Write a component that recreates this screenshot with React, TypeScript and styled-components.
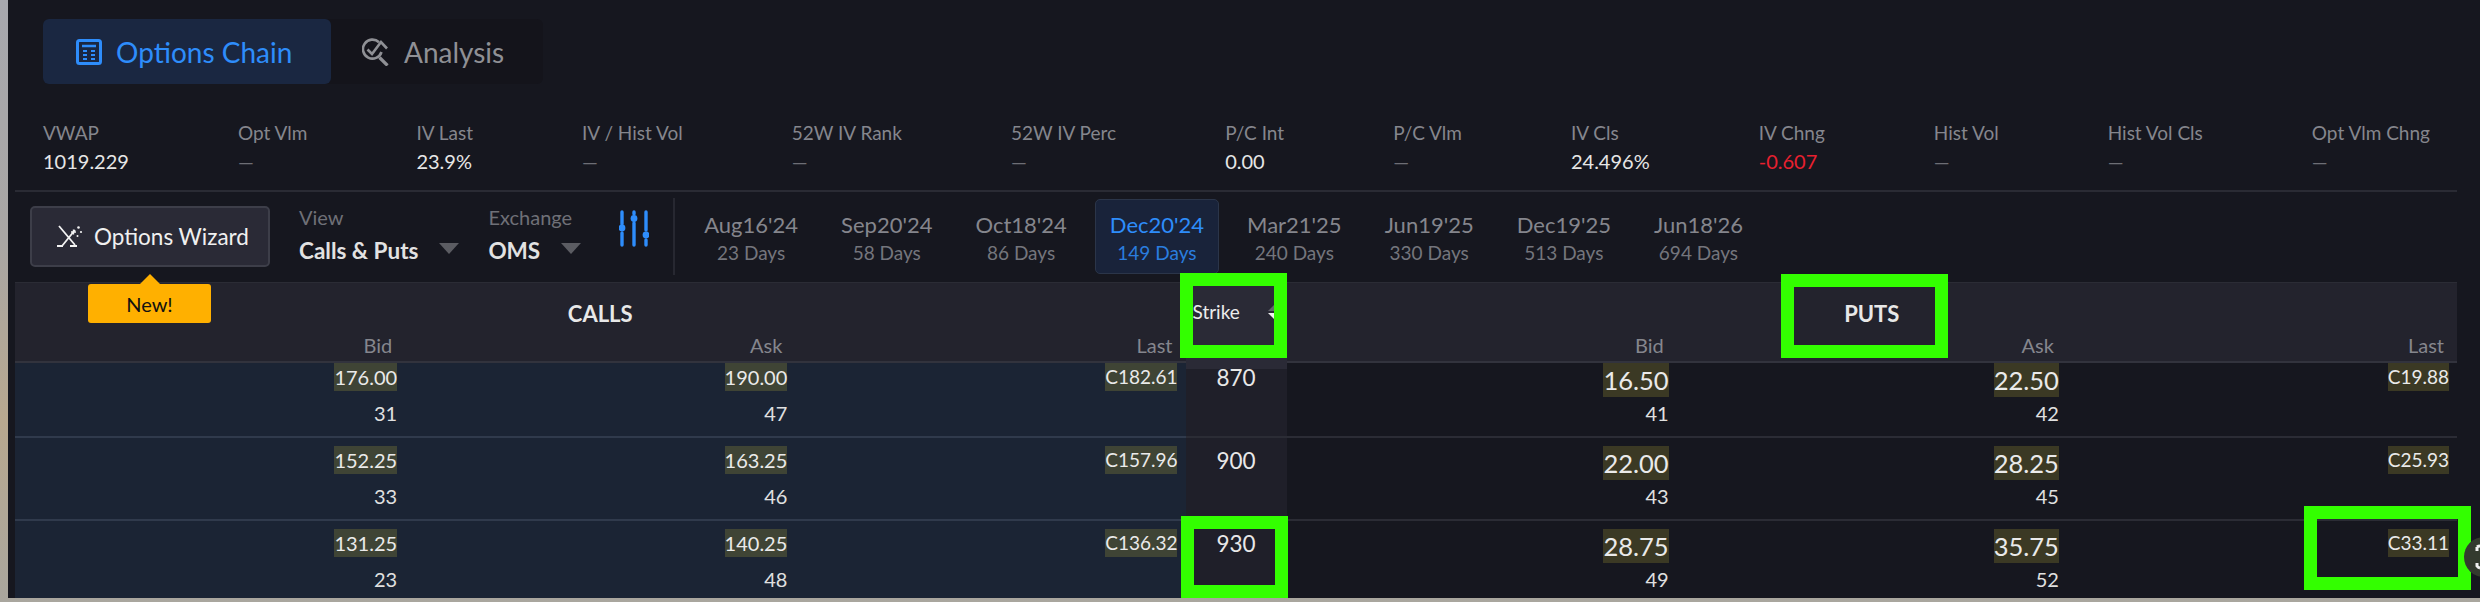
import React from 'react';
import styled, { createGlobalStyle } from 'styled-components';

const GlobalStyle = createGlobalStyle`
  html, body {
    margin: 0;
    padding: 0;
    height: 602px;
    overflow: hidden;
  }
  html {
    background: linear-gradient(180deg, #a7a8ae 0%, #a9a6a4 40%, #b8a88f 70%, #a9a69e 100%);
  }
  * {
    box-sizing: border-box;
  }
`;

const stats = [
  { label: 'VWAP', value: '1019.229' },
  { label: 'Opt Vlm' },
  { label: 'IV Last', value: '23.9%' },
  { label: 'IV / Hist Vol' },
  { label: '52W IV Rank' },
  { label: '52W IV Perc' },
  { label: 'P/C Int', value: '0.00' },
  { label: 'P/C Vlm' },
  { label: 'IV Cls', value: '24.496%' },
  { label: 'IV Chng', value: '-0.607', down: true },
  { label: 'Hist Vol' },
  { label: 'Hist Vol Cls' },
  { label: 'Opt Vlm Chng' },
];

const expiries = [
  { date: "Aug16'24", days: '23 Days' },
  { date: "Sep20'24", days: '58 Days' },
  { date: "Oct18'24", days: '86 Days' },
  { date: "Dec20'24", days: '149 Days', active: true },
  { date: "Mar21'25", days: '240 Days' },
  { date: "Jun19'25", days: '330 Days' },
  { date: "Dec19'25", days: '513 Days' },
  { date: "Jun18'26", days: '694 Days' },
];

const rows = [
  {
    strike: '870',
    calls: { bid: '176.00', bidSize: '31', ask: '190.00', askSize: '47', last: 'C182.61' },
    puts: { bid: '16.50', bidSize: '41', ask: '22.50', askSize: '42', last: 'C19.88' },
  },
  {
    strike: '900',
    calls: { bid: '152.25', bidSize: '33', ask: '163.25', askSize: '46', last: 'C157.96' },
    puts: { bid: '22.00', bidSize: '43', ask: '28.25', askSize: '45', last: 'C25.93' },
  },
  {
    strike: '930',
    calls: { bid: '131.25', bidSize: '23', ask: '140.25', askSize: '48', last: 'C136.32' },
    puts: { bid: '28.75', bidSize: '49', ask: '35.75', askSize: '52', last: 'C33.11' },
  },
];

function TableIcon() {
  return (
    <svg width="26" height="26" viewBox="0 0 26 26" fill="none" stroke="#2e8dfb">
      <rect x="1.5" y="1.5" width="23" height="23" rx="2" strokeWidth="3" />
      <path d="M6 7h14" strokeWidth="2.5" />
      <path d="M7 12h4M15 12h4M7 16h4M15 16h4M7 20h4M15 20h4" strokeWidth="2.2" />
    </svg>
  );
}

function AnalysisIcon() {
  return (
    <svg width="30" height="28" viewBox="0 0 30 28" fill="none" stroke="#8f9095" strokeWidth="2.6">
      <path d="M17 4.2A9.5 9.5 0 1 0 19.5 14" />
      <path d="M5.5 11.5l4.5 4.5 9-12 6 6.5" />
      <path d="M17.5 19.5l8 8" strokeWidth="3.2" />
    </svg>
  );
}

function WizardIcon() {
  return (
    <svg width="26" height="24" viewBox="0 0 26 24" fill="none" stroke="#f2f2f2" strokeWidth="1.8">
      <path d="M2 1l16 19M0 21h6l-1 0M18 5L5 21M13 21h7" />
      <path d="M14 7h5M16.5 4.5v5" strokeWidth="1.4" />
      <circle cx="21.5" cy="2.5" r="1.3" fill="#f2f2f2" stroke="none" />
      <circle cx="24" cy="7" r="1.1" fill="#f2f2f2" stroke="none" />
      <circle cx="20.5" cy="11" r="1" fill="#f2f2f2" stroke="none" />
    </svg>
  );
}

function SlidersIcon() {
  return (
    <svg width="30" height="37" viewBox="0 0 30 37" fill="none" stroke="#2e8dfb" strokeWidth="3.4" strokeLinecap="round">
      <path d="M3 2v12M3 23v12M15 2v2M15 13v22M27 2v18M27 30v5" />
      <circle cx="3" cy="18" r="3.4" fill="#2e8dfb" stroke="none" />
      <circle cx="15" cy="8.5" r="3.4" fill="#2e8dfb" stroke="none" />
      <circle cx="27" cy="25" r="3.4" fill="#2e8dfb" stroke="none" />
    </svg>
  );
}

function SideCells({ side, large }: { side: any; large?: boolean }) {
  return (
    <>
      <QuoteCell>
        <Price $large={large}>{side.bid}</Price>
        <Size>{side.bidSize}</Size>
      </QuoteCell>
      <QuoteCell>
        <Price $large={large}>{side.ask}</Price>
        <Size>{side.askSize}</Size>
      </QuoteCell>
      <QuoteCell>
        <LastPrice>{side.last}</LastPrice>
      </QuoteCell>
    </>
  );
}

export default function App() {
  return (
    <>
      <GlobalStyle />
      <Terminal>
        <TabBar>
          <Tab $active>
            <TableIcon />
            Options Chain
          </Tab>
          <Tab>
            <AnalysisIcon />
            Analysis
          </Tab>
        </TabBar>

        <StatsRow>
          {stats.map((stat) => (
            <Stat key={stat.label}>
              <StatLabel>{stat.label}</StatLabel>
              <StatValue $down={stat.down} $empty={!stat.value}>
                {stat.value || '—'}
              </StatValue>
            </Stat>
          ))}
        </StatsRow>

        <Toolbar>
          <WizardWrap>
            <WizardButton>
              <WizardIcon />
              Options Wizard
            </WizardButton>
            <NewTip>New!</NewTip>
          </WizardWrap>
          <Picker>
            <PickerLabel>View</PickerLabel>
            <PickerValue>
              Calls &amp; Puts
              <Caret />
            </PickerValue>
          </Picker>
          <Picker>
            <PickerLabel>Exchange</PickerLabel>
            <PickerValue>
              OMS
              <Caret />
            </PickerValue>
          </Picker>
          <SlidersSlot>
            <SlidersIcon />
          </SlidersSlot>
          <ExpiryList>
            {expiries.map((expiry) => (
              <Expiry key={expiry.date} $active={expiry.active}>
                <ExpiryDate>{expiry.date}</ExpiryDate>
                <ExpiryDays>{expiry.days}</ExpiryDays>
              </Expiry>
            ))}
          </ExpiryList>
        </Toolbar>

        <Table>
          <HeaderRow>
            <HeaderSide>
              <SideTitle>CALLS</SideTitle>
              <ColumnLabel>Bid</ColumnLabel>
              <ColumnLabel>Ask</ColumnLabel>
              <ColumnLabel>Last</ColumnLabel>
            </HeaderSide>
            <StrikeHead>
              <StrikeTitle>
                Strike
                <SortArrows>
                  <SortUp />
                  <SortDown />
                </SortArrows>
              </StrikeTitle>
              <StrikeIv>IV: 23.57%</StrikeIv>
            </StrikeHead>
            <HeaderSide>
              <SideTitle>PUTS</SideTitle>
              <ColumnLabel>Bid</ColumnLabel>
              <ColumnLabel>Ask</ColumnLabel>
              <ColumnLabel>Last</ColumnLabel>
            </HeaderSide>
          </HeaderRow>
          <RowList>
            {rows.map((row) => (
              <Row key={row.strike}>
                <CallsSide>
                  <SideCells side={row.calls} />
                </CallsSide>
                <StrikeCell>{row.strike}</StrikeCell>
                <PutsSide>
                  <SideCells side={row.puts} large />
                </PutsSide>
              </Row>
            ))}
          </RowList>
        </Table>

        <Marker $left={1172} $top={273} $width={107} $height={85} />
        <Marker $left={1773} $top={274} $width={167} $height={84} />
        <Marker $left={1173} $top={516} $width={107} $height={82} />
        <Marker $left={2296} $top={506} $width={167} $height={84} />
        <ChatBubble>
          <svg width="16" height="40" viewBox="0 0 16 40" fill="none" stroke="#f0f0f0" strokeWidth="3">
            <path d="M13 10a5 5 0 0 1 3-1M13 10v4M13 26v3a5 5 0 0 0 3 2" />
          </svg>
        </ChatBubble>
      </Terminal>
    </>
  );
}

const Terminal = styled.div`
  position: relative;
  width: 2472px;
  height: 598px;
  margin-left: 8px;
  padding: 19px 23px 0 7px;
  overflow: hidden;
  background: #16171f;
  color: #e4e4e4;
  font-family: Lato, 'Liberation Sans', sans-serif;
`;

const TabBar = styled.div`
  display: flex;
  width: 500px;
  height: 65px;
  margin-left: 28px;
  border-radius: 6px;
  background: #14141b;
`;

const Tab = styled.div<{ $active?: boolean }>`
  display: flex;
  align-items: center;
  gap: ${(p) => (p.$active ? '14px' : '12px')};
  width: ${(p) => (p.$active ? '288px' : '212px')};
  padding-left: ${(p) => (p.$active ? '33px' : '31px')};
  border-radius: 6px;
  background: ${(p) => (p.$active ? '#1a2741' : 'transparent')};
  color: ${(p) => (p.$active ? '#2e8dfb' : '#8f9095')};
  font-size: 28px;
`;

const StatsRow = styled.div`
  display: flex;
  justify-content: space-between;
  height: 108px;
  padding: 38px 27px 0 28px;
  border-bottom: 2px solid #2a2b34;
`;

const Stat = styled.div`
  display: flex;
  flex-direction: column;
  gap: 5px;
`;

const StatLabel = styled.div`
  color: #85868d;
  font-size: 19px;
  line-height: 22px;
  white-space: nowrap;
`;

const StatValue = styled.div<{ $down?: boolean; $empty?: boolean }>`
  color: ${(p) => (p.$down ? '#e8202f' : p.$empty ? '#6d6e75' : '#e6e6e6')};
  font-size: 20px;
  line-height: 24px;
  white-space: nowrap;
`;

const Toolbar = styled.div`
  display: flex;
  align-items: flex-start;
  height: 90px;
  padding: 14px 0 0 15px;
`;

const WizardWrap = styled.div`
  position: relative;
  flex: none;
  margin-right: 29px;
`;

const WizardButton = styled.div`
  display: flex;
  align-items: center;
  gap: 11px;
  width: 240px;
  height: 61px;
  padding-left: 25px;
  border: 2px solid #3d3e49;
  border-radius: 5px;
  background: #2a2a36;
  color: #f0f0f0;
  font-size: 22.5px;
`;

const NewTip = styled.div`
  position: absolute;
  top: 78px;
  left: 58px;
  z-index: 3;
  width: 123px;
  height: 39px;
  border-radius: 3px;
  background: #ffb000;
  color: #111;
  font-size: 20px;
  line-height: 40px;
  text-align: center;

  &::before {
    content: '';
    position: absolute;
    top: -10px;
    left: 50%;
    margin-left: -10px;
    border-right: 10px solid transparent;
    border-bottom: 10px solid #ffb000;
    border-left: 10px solid transparent;
  }
`;

const Picker = styled.div`
  flex: none;
  margin-right: 29px;
`;

const PickerLabel = styled.div`
  margin-top: -1px;
  color: #6f7077;
  font-size: 20px;
  line-height: 24px;
`;

const PickerValue = styled.div`
  display: flex;
  align-items: center;
  gap: 21px;
  margin-top: 9px;
  color: #e2e2e2;
  font-size: 22.5px;
  font-weight: 700;
  line-height: 26px;
`;

const Caret = styled.span`
  margin-top: -5px;
  border-top: 11px solid #5b5c62;
  border-right: 10px solid transparent;
  border-left: 10px solid transparent;
`;

const SlidersSlot = styled.div`
  flex: none;
  width: 56px;
  height: 77px;
  margin: -8px 0 0 9px;
  padding-top: 12px;
  border-right: 2px solid #272831;
`;

const ExpiryList = styled.div`
  display: flex;
  gap: 13px;
  margin-top: -7px;
  margin-left: 14px;
`;

const Expiry = styled.div<{ $active?: boolean }>`
  display: flex;
  flex-direction: column;
  align-items: center;
  height: 75px;
  padding: 11px 14px 0;
  border: 1px solid ${(p) => (p.$active ? '#2b3549' : 'transparent')};
  border-radius: 5px;
  background: ${(p) => (p.$active ? '#19233a' : 'transparent')};
  color: ${(p) => (p.$active ? '#2e8dfb' : '#85868d')};
`;

const ExpiryDate = styled.div`
  font-size: 22px;
  line-height: 28px;
  white-space: nowrap;
`;

const ExpiryDays = styled.div`
  font-size: 19px;
  line-height: 28px;
  opacity: 0.85;
  white-space: nowrap;
`;

const Table = styled.div`
  display: flex;
  flex-direction: column;
`;

const HeaderRow = styled.div`
  position: relative;
  z-index: 1;
  display: grid;
  grid-template-columns: 1fr 101px 1fr;
  height: 81px;
  border-top: 1px solid #2b2c35;
  border-bottom: 2px solid #32333d;
  background: #23232d;
`;

const HeaderSide = styled.div`
  display: grid;
  grid-template-columns: repeat(3, 1fr);
  grid-template-rows: 49px 1fr;
`;

const SideTitle = styled.div`
  grid-column: 1 / -1;
  align-self: end;
  margin-bottom: 4px;
  color: #e8e8e8;
  font-size: 22px;
  font-weight: 700;
  line-height: 28px;
  text-align: center;
`;

const ColumnLabel = styled.div`
  padding-right: 13px;
  color: #85868d;
  font-size: 20px;
  line-height: 26px;
  text-align: right;
`;

const StrikeHead = styled.div`
  height: 86px;
  padding: 17px 0 0 7px;
  background: #2a2a36;
  overflow: hidden;
`;

const StrikeTitle = styled.div`
  display: flex;
  align-items: center;
  justify-content: space-between;
  padding-right: 5px;
  color: #ececec;
  font-size: 19px;
  line-height: 24px;
`;

const SortArrows = styled.span`
  display: flex;
  flex-direction: column;
  gap: 2px;
`;

const SortUp = styled.span`
  border-right: 7px solid transparent;
  border-bottom: 7px solid #63646c;
  border-left: 7px solid transparent;
`;

const SortDown = styled.span`
  border-top: 7px solid #f0f0f0;
  border-right: 7px solid transparent;
  border-left: 7px solid transparent;
`;

const StrikeIv = styled.div`
  margin-top: 16px;
  color: #e4e4e4;
  font-size: 15px;
  line-height: 20px;
  white-space: nowrap;
`;

const RowList = styled.div`
  margin-top: -8px;
`;

const Row = styled.div`
  display: grid;
  grid-template-columns: 1fr 101px 1fr;
  height: 83px;
`;

const CallsSide = styled.div`
  display: grid;
  grid-template-columns: repeat(3, 1fr);
  border-bottom: 2px solid #303a4c;
  background: #1b2434;
`;

const PutsSide = styled.div`
  display: grid;
  grid-template-columns: repeat(3, 1fr);
  border-bottom: 2px solid #2b2c35;
`;

const QuoteCell = styled.div`
  display: flex;
  flex-direction: column;
  align-items: flex-end;
  padding: 8px 8px 0 0;
`;

const Price = styled.div<{ $large?: boolean }>`
  height: ${(p) => (p.$large ? '34px' : '28px')};
  margin-bottom: ${(p) => (p.$large ? '4px' : '10px')};
  background: rgba(255, 235, 60, 0.16);
  color: #eaeaea;
  font-size: ${(p) => (p.$large ? '25.5px' : '20px')};
  line-height: ${(p) => (p.$large ? '34px' : '28px')};
`;

const LastPrice = styled.div`
  height: 28px;
  background: rgba(255, 235, 60, 0.16);
  color: #eaeaea;
  font-size: 19px;
  line-height: 28px;
`;

const Size = styled.div`
  color: #e0e0e0;
  font-size: 20px;
  line-height: 24px;
`;

const StrikeCell = styled.div`
  padding-top: 10px;
  border-bottom: 2px solid #2b2c35;
  background: #1f1f29;
  color: #e8e8e8;
  font-size: 22.5px;
  line-height: 26px;
  text-align: center;
`;

const Marker = styled.div<{ $left: number; $top: number; $width: number; $height: number }>`
  position: absolute;
  top: ${(p) => p.$top}px;
  left: ${(p) => p.$left}px;
  z-index: 4;
  width: ${(p) => p.$width}px;
  height: ${(p) => p.$height}px;
  border: 13px solid #33ff00;
`;

const ChatBubble = styled.div`
  position: absolute;
  top: 537px;
  left: 2456px;
  z-index: 5;
  width: 40px;
  height: 40px;
  border-radius: 50%;
  background: #333a2e;

  svg {
    display: block;
  }
`;
